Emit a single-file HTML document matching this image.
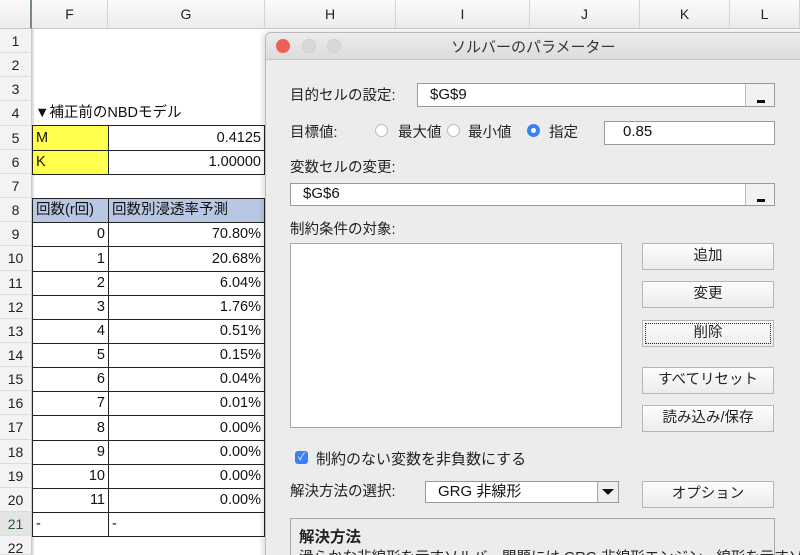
<!DOCTYPE html>
<html style="width:800px;height:555px;overflow:hidden"><head><meta charset="utf-8"><style>
*{margin:0;padding:0;box-sizing:border-box}
body{width:800px;height:555px;overflow:hidden;background:#fff;font-family:"Liberation Sans","Noto Sans CJK JP",sans-serif;position:relative;color:#111}
.a{position:absolute}
.ch{position:absolute;top:0;height:29px;background:linear-gradient(#fafafa,#ececec);border-right:1px solid #d4d4d4;border-bottom:1px solid #c8c8c8;font-size:14px;text-align:center;line-height:29px;color:#222}
.rh{position:absolute;left:0;width:32px;background:#f3f3f3;border-bottom:1px solid #ddd;border-right:1px solid #ccc;font-size:14px;text-align:center;color:#222}
.c{position:absolute;font-size:14.5px;border:1px solid #222;padding:0 3px;background:#fff}
.dl{font-size:14.5px;color:#222}
.inp{position:absolute;background:#fff;border:1px solid #9a9a9a;font-size:15px;padding-left:12px}
.btn{position:absolute;left:642px;width:132px;height:27px;border:1px solid #b5b5b5;background:linear-gradient(#fdfdfd,#ececec);font-size:14.5px;text-align:center;line-height:25px;color:#222}
.rad{position:absolute;width:13px;height:13px;border-radius:50%;border:1px solid #bbb;background:#fff}
.mb{position:absolute;right:0;top:0;width:29px;height:100%;border-left:1px solid #bbb;background:#f2f2f2}
.mb:after{content:"";position:absolute;left:11px;bottom:3px;width:8px;height:3px;background:#111}
</style></head><body>
<div class="ch" style="left:0;width:32px;border-right:2px solid #7a8a7a"></div>
<div class="ch" style="left:32px;width:76px">F</div>
<div class="ch" style="left:108px;width:157px">G</div>
<div class="ch" style="left:265px;width:131px">H</div>
<div class="ch" style="left:396px;width:134px">I</div>
<div class="ch" style="left:530px;width:110px">J</div>
<div class="ch" style="left:640px;width:90px">K</div>
<div class="ch" style="left:730px;width:70px">L</div>
<div class="rh" style="top:29px;height:24px;line-height:24px">1</div>
<div class="rh" style="top:53px;height:24px;line-height:24px">2</div>
<div class="rh" style="top:77px;height:24px;line-height:24px">3</div>
<div class="rh" style="top:101px;height:25px;line-height:25px">4</div>
<div class="rh" style="top:126px;height:24px;line-height:24px">5</div>
<div class="rh" style="top:150px;height:24px;line-height:24px">6</div>
<div class="rh" style="top:174px;height:24px;line-height:24px">7</div>
<div class="rh" style="top:198px;height:24px;line-height:24px">8</div>
<div class="rh" style="top:222px;height:24px;line-height:24px">9</div>
<div class="rh" style="top:246px;height:25px;line-height:25px">10</div>
<div class="rh" style="top:271px;height:24px;line-height:24px">11</div>
<div class="rh" style="top:295px;height:24px;line-height:24px">12</div>
<div class="rh" style="top:319px;height:24px;line-height:24px">13</div>
<div class="rh" style="top:343px;height:24px;line-height:24px">14</div>
<div class="rh" style="top:367px;height:24px;line-height:24px">15</div>
<div class="rh" style="top:391px;height:24px;line-height:24px">16</div>
<div class="rh" style="top:415px;height:25px;line-height:25px">17</div>
<div class="rh" style="top:440px;height:24px;line-height:24px">18</div>
<div class="rh" style="top:464px;height:24px;line-height:24px">19</div>
<div class="rh" style="top:488px;height:24px;line-height:24px">20</div>
<div class="rh" style="top:512px;height:24px;line-height:24px;background:#e4e4e4;color:#2a5a2a">21</div>
<div class="rh" style="top:536px;height:19px;line-height:24px">22</div>
<div class="a" style="left:32px;top:29px;width:2px;height:526px;background:#e0e0e0"></div>

<div class="a" style="left:35px;top:101px;height:25px;line-height:25px;font-size:14.5px">▼補正前のNBDモデル</div>
<div class="c" style="left:32px;top:125px;width:77px;height:26px;line-height:24px;background:#ffff4d">M</div>
<div class="c" style="left:108px;top:125px;width:157px;height:26px;line-height:24px;text-align:right">0.4125</div>
<div class="c" style="left:32px;top:150px;width:77px;height:25px;line-height:23px;background:#ffff4d">K</div>
<div class="c" style="left:108px;top:150px;width:157px;height:25px;line-height:23px;text-align:right">1.00000</div>

<div class="c" style="left:32px;top:198px;width:77px;height:25px;line-height:23px;background:#b8c8e4">回数(r回)</div>
<div class="c" style="left:108px;top:198px;width:157px;height:25px;line-height:23px;background:#b8c8e4">回数別浸透率予測</div>

<div class="c" style="left:32px;top:222px;width:77px;height:25px;line-height:23px;text-align:right">0</div><div class="c" style="left:108px;top:222px;width:157px;height:25px;line-height:23px;text-align:right">70.80%</div>
<div class="c" style="left:32px;top:246px;width:77px;height:26px;line-height:24px;text-align:right">1</div><div class="c" style="left:108px;top:246px;width:157px;height:26px;line-height:24px;text-align:right">20.68%</div>
<div class="c" style="left:32px;top:271px;width:77px;height:25px;line-height:23px;text-align:right">2</div><div class="c" style="left:108px;top:271px;width:157px;height:25px;line-height:23px;text-align:right">6.04%</div>
<div class="c" style="left:32px;top:295px;width:77px;height:25px;line-height:23px;text-align:right">3</div><div class="c" style="left:108px;top:295px;width:157px;height:25px;line-height:23px;text-align:right">1.76%</div>
<div class="c" style="left:32px;top:319px;width:77px;height:25px;line-height:23px;text-align:right">4</div><div class="c" style="left:108px;top:319px;width:157px;height:25px;line-height:23px;text-align:right">0.51%</div>
<div class="c" style="left:32px;top:343px;width:77px;height:25px;line-height:23px;text-align:right">5</div><div class="c" style="left:108px;top:343px;width:157px;height:25px;line-height:23px;text-align:right">0.15%</div>
<div class="c" style="left:32px;top:367px;width:77px;height:25px;line-height:23px;text-align:right">6</div><div class="c" style="left:108px;top:367px;width:157px;height:25px;line-height:23px;text-align:right">0.04%</div>
<div class="c" style="left:32px;top:391px;width:77px;height:25px;line-height:23px;text-align:right">7</div><div class="c" style="left:108px;top:391px;width:157px;height:25px;line-height:23px;text-align:right">0.01%</div>
<div class="c" style="left:32px;top:415px;width:77px;height:26px;line-height:24px;text-align:right">8</div><div class="c" style="left:108px;top:415px;width:157px;height:26px;line-height:24px;text-align:right">0.00%</div>
<div class="c" style="left:32px;top:440px;width:77px;height:25px;line-height:23px;text-align:right">9</div><div class="c" style="left:108px;top:440px;width:157px;height:25px;line-height:23px;text-align:right">0.00%</div>
<div class="c" style="left:32px;top:464px;width:77px;height:25px;line-height:23px;text-align:right">10</div><div class="c" style="left:108px;top:464px;width:157px;height:25px;line-height:23px;text-align:right">0.00%</div>
<div class="c" style="left:32px;top:488px;width:77px;height:25px;line-height:23px;text-align:right">11</div><div class="c" style="left:108px;top:488px;width:157px;height:25px;line-height:23px;text-align:right">0.00%</div>
<div class="c" style="left:32px;top:512px;width:77px;height:25px;line-height:23px">-</div><div class="c" style="left:108px;top:512px;width:157px;height:25px;line-height:23px">-</div>

<div class="a" style="left:265px;top:32px;width:545px;height:530px;background:#ececec;border:1px solid #bbb;border-radius:6px 6px 0 0;box-shadow:-2px 0 6px rgba(0,0,0,.15)">
  <div class="a" style="left:0;top:0;width:100%;height:27px;background:linear-gradient(#ececec,#dcdcdc);border-bottom:1px solid #c4c4c4;border-radius:6px 6px 0 0"></div>
</div>
<div class="a" style="left:276px;top:39px;width:14px;height:14px;border-radius:50%;background:#ee5f57"></div>
<div class="a" style="left:302px;top:39px;width:14px;height:14px;border-radius:50%;background:#d8d8d8;border:1px solid #cfcfcf"></div>
<div class="a" style="left:327px;top:39px;width:14px;height:14px;border-radius:50%;background:#d8d8d8;border:1px solid #cfcfcf"></div>
<div class="a dl" style="left:451px;top:36px;font-size:15px;color:#333">ソルバーのパラメーター</div>

<div class="a dl" style="left:290px;top:84px">目的セルの設定:</div>
<div class="inp" style="left:417px;top:83px;width:358px;height:24px;line-height:22px">$G$9<div class="mb"></div></div>

<div class="a dl" style="left:290px;top:121px">目標値:</div>
<div class="rad" style="left:375px;top:124px"></div><div class="a dl" style="left:398px;top:121px">最大値</div>
<div class="rad" style="left:447px;top:124px"></div><div class="a dl" style="left:468px;top:121px">最小値</div>
<div class="a" style="left:527px;top:124px;width:13px;height:13px;border-radius:50%;background:#3b82f0"><div class="a" style="left:4px;top:4px;width:5px;height:5px;border-radius:50%;background:#fff"></div></div>
<div class="a dl" style="left:549px;top:121px">指定</div>
<div class="inp" style="left:604px;top:121px;width:171px;height:24px;line-height:20px;padding-left:18px">0.85</div>

<div class="a dl" style="left:290px;top:156px">変数セルの変更:</div>
<div class="inp" style="left:290px;top:183px;width:485px;height:23px;line-height:19px">$G$6<div class="mb"></div></div>

<div class="a dl" style="left:290px;top:218px">制約条件の対象:</div>
<div class="a" style="left:290px;top:243px;width:332px;height:185px;background:#fff;border:1px solid #a8a8a8"></div>

<div class="btn" style="top:243px">追加</div>
<div class="btn" style="top:281px">変更</div>
<div class="btn" style="top:320px"><div class="a" style="left:2px;top:2px;right:2px;bottom:2px;border:1px dotted #222"></div>削除</div>
<div class="btn" style="top:367px">すべてリセット</div>
<div class="btn" style="top:405px">読み込み/保存</div>

<div class="a" style="left:295px;top:451px;width:13px;height:13px;border-radius:3px;background:#3b82f0;color:#fff;font-size:10px;line-height:13px;text-align:center">✓</div>
<div class="a dl" style="left:316px;top:448px;font-size:15px">制約のない変数を非負数にする</div>

<div class="a dl" style="left:290px;top:480px">解決方法の選択:</div>
<div class="a" style="left:425px;top:481px;width:194px;height:22px;background:#fff;border:1px solid #9a9a9a;font-size:15px;line-height:20px;padding-left:12px">GRG 非線形
  <div class="a" style="right:0;top:0;width:21px;height:20px;border-left:1px solid #aaa;background:#eee"><div class="a" style="left:4px;top:7px;width:0;height:0;border-left:6px solid transparent;border-right:6px solid transparent;border-top:6px solid #111"></div></div>
</div>
<div class="btn" style="top:481px">オプション</div>

<div class="a" style="left:290px;top:518px;width:485px;height:60px;border:1px solid #a8a8a8;background:#ececec"></div>
<div class="a dl" style="left:299px;top:525px;font-size:15.5px;font-weight:bold">解決方法</div>
<div class="a dl" style="left:299px;top:546px;font-size:14.5px;white-space:nowrap">滑らかな非線形を示すソルバー問題には GRG 非線形エンジン、線形を示すソル</div>
</body></html>
